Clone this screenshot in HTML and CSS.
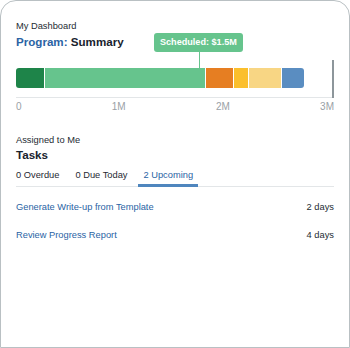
FILE: index.html
```html
<!DOCTYPE html>
<html>
<head>
<meta charset="utf-8">
<link rel="stylesheet" href="styles.css">
</head>
<body>
<div class="card">
  <div class="eyebrow">My Dashboard</div>
  <h1 class="title"><span class="accent">Program:</span> Summary</h1>
  <div class="chart">
    <div class="tooltip">Scheduled: $1.5M</div>
    <div class="tooltip-line"></div>
    <div class="track">
      <div class="bar">
        <div class="seg s1"></div>
        <div class="seg s2"></div>
        <div class="seg s3"></div>
        <div class="seg s4"></div>
        <div class="seg s5"></div>
        <div class="seg s6"></div>
      </div>
      <div class="tick"></div>
    </div>
    <div class="axis">
      <span>0</span><span>1M</span><span>2M</span><span>3M</span>
    </div>
  </div>
  <div class="eyebrow section">Assigned to Me</div>
  <h2 class="subtitle">Tasks</h2>
  <div class="tabs">
    <div class="tab">0 Overdue</div>
    <div class="tab">0 Due Today</div>
    <div class="tab active">2 Upcoming</div>
  </div>
  <ul class="tasks">
    <li class="task"><a class="task-name">Generate Write-up from Template</a><span class="due">2 days</span></li>
    <li class="task"><a class="task-name">Review Progress Report</a><span class="due">4 days</span></li>
  </ul>
</div>
</body>
</html>
```
FILE: styles.css
```css
* { box-sizing: border-box; }
html, body { margin: 0; padding: 0; background: #fff; }
body { font-family: "Liberation Sans", Arial, sans-serif; color: #1f2933; }
.card {
  width: 350px;
  height: 348px;
  border: 1px solid #b9c0c3;
  border-radius: 16px 16px 0 0;
  padding: 19.3px 15px 0 15px;
}
.eyebrow { font-size: 9.3px; line-height: 12px; color: #252c33; }
.title {
  margin: 3px 0 0;
  font-size: 11.6px;
  line-height: 14px;
  font-weight: 700;
  color: #18222d;
}
.accent { color: #2a63a4; }
.chart { position: relative; margin-top: 11.5px; }
.tooltip {
  position: absolute;
  left: 138px;
  top: -28px;
  height: 19px;
  padding: 0 6px;
  background: #66c48d;
  color: #fff;
  font-size: 9.1px;
  font-weight: 700;
  line-height: 19px;
  border-radius: 3px;
  white-space: nowrap;
}
.tooltip-line {
  position: absolute;
  left: 183px;
  top: -9px;
  width: 1px;
  height: 16px;
  background: #66c48d;
}
.track {
  position: relative;
  height: 37px;
  border-bottom: 1px solid #e3e6e8;
  display: flex;
  align-items: flex-end;
}
.bar {
  display: flex;
  gap: 1px;
  height: 20px;
  margin-bottom: 9px;
}
.seg { height: 100%; }
.s1 { width: 28px; background: #1e8449; border-radius: 3px 0 0 3px; }
.s2 { width: 160px; background: #66c48d; }
.s3 { width: 27px; background: #e67e22; }
.s4 { width: 14px; background: #fbbf2c; }
.s5 { width: 32px; background: #f8d684; }
.s6 { width: 22px; background: #5a8dc1; border-radius: 0 3px 3px 0; }
.tick {
  position: absolute;
  right: 0;
  bottom: -1px;
  width: 2px;
  height: 38px;
  background: #8d969b;
}
.axis {
  display: flex;
  justify-content: space-between;
  margin-top: 3.5px;
  font-size: 10px;
  line-height: 12px;
  color: #9aa1a6;
}
.section { margin-top: 20.3px; }
.subtitle {
  margin: 2.2px 0 0;
  font-size: 11.6px;
  line-height: 14px;
  font-weight: 700;
  color: #18222d;
}
.tabs {
  display: flex;
  gap: 6px;
  margin-top: 7.3px;
  border-bottom: 1px solid #e3e6e8;
}
.tab {
  font-size: 9.3px;
  line-height: 12px;
  padding: 0 5px 4.7px;
  color: #1f2933;
}
.tab:first-child { padding-left: 0; }
.tab.active {
  color: #2a63a4;
  border-bottom: 3px solid #4f86be;
  margin-bottom: -1px;
  padding-bottom: 2.7px;
}
.tasks {
  list-style: none;
  margin: 13.8px 0 0;
  padding: 0;
  display: flex;
  flex-direction: column;
  gap: 16.7px;
}
.task {
  display: flex;
  justify-content: space-between;
  font-size: 9.3px;
  line-height: 12px;
}
.task-name { color: #2a63a4; }
.due { color: #252c33; }
```
